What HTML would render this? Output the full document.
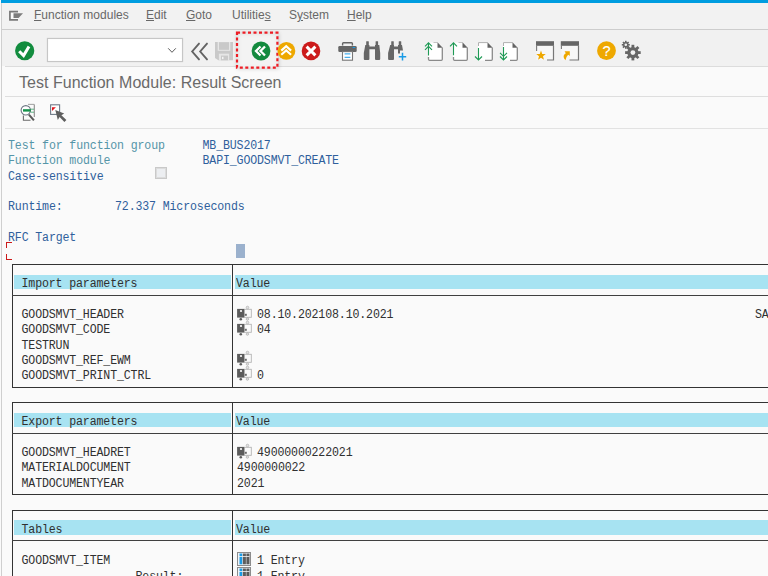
<!DOCTYPE html>
<html><head><meta charset="utf-8">
<style>
*{margin:0;padding:0;box-sizing:border-box}
html,body{width:768px;height:576px;overflow:hidden;background:#fafafa;position:relative;font-family:"Liberation Sans",sans-serif}
.a{position:absolute}
.m{position:absolute;font-family:"Liberation Mono",monospace;font-size:11.6px;letter-spacing:-0.14px;white-space:pre;line-height:15px;color:#303030;transform:scaleY(1.07);transform-origin:0 8px}
.mn{position:absolute;font-size:12px;line-height:14px;color:#686868;white-space:pre}
.mn u{text-decoration:underline;text-underline-offset:1px}
.ic{position:absolute}
.tc{color:#5595a8}
.bl{color:#2f5f9c}
</style></head><body>
<!-- top blue bar -->
<div class="a" style="left:1px;top:0;width:767px;height:3px;background:#009de0"></div>
<!-- menu bar -->
<div class="a" style="left:2px;top:3px;width:766px;height:26px;background:#f2f2f2"></div>
<div class="a" style="left:2px;top:29px;width:766px;height:1px;background:#cdcdcd"></div>
<!-- toolbar -->
<div class="a" style="left:2px;top:30px;width:766px;height:36px;background:#f1f1f1"></div>
<div class="a" style="left:5px;top:66px;width:763px;height:1px;background:#dcdcdc"></div>
<!-- title -->
<div class="a" style="left:0;top:67px;width:768px;height:29px;background:#fafafa"></div>
<div class="a" style="left:5px;top:96px;width:763px;height:1px;background:#dedede"></div>
<!-- app toolbar -->
<div class="a" style="left:0;top:97px;width:768px;height:31px;background:#fafafa"></div>
<div class="a" style="left:5px;top:128px;width:763px;height:1px;background:#e2e2e2"></div>
<!-- left border -->
<div class="a" style="left:1px;top:3px;width:1px;height:573px;background:#cfcfcf"></div>

<!-- menu -->
<svg class="ic" style="left:9px;top:10px" width="15" height="12" viewBox="0 0 15 12">
  <rect x="1.7" y="2.4" width="7.3" height="6.6" fill="#fafafa"/>
  <path d="M9 1.6H0.9V9.8H9" fill="none" stroke="#7a7a7a" stroke-width="1.7"/>
  <path d="M4.5 3.2H14L9.6 7.9H4.5Z" fill="#7d7d7d"/>
</svg>
<div class="mn" style="left:34px;top:8px"><u>F</u>unction modules</div>
<div class="mn" style="left:146px;top:8px"><u>E</u>dit</div>
<div class="mn" style="left:186px;top:8px"><u>G</u>oto</div>
<div class="mn" style="left:232px;top:8px">Utilitie<u>s</u></div>
<div class="mn" style="left:289px;top:8px">S<u>y</u>stem</div>
<div class="mn" style="left:347px;top:8px"><u>H</u>elp</div>

<!-- toolbar icons -->
<svg class="ic" style="left:15px;top:41px" width="20" height="20" viewBox="0 0 20 20">
  <circle cx="9.7" cy="9.75" r="9.6" fill="#128c3e"/>
  <path d="M4.2 10.2L8.6 14.6L14 5.6" fill="none" stroke="#fff" stroke-width="3" stroke-linejoin="miter"/>
</svg>
<div class="a" style="left:47px;top:38px;width:136px;height:23.5px;background:#fff;border:1px solid #c6c6c6;box-shadow:0 0 1px rgba(0,0,0,0.15), inset 0 0 1px rgba(0,0,0,0.12)"></div>
<svg class="ic" style="left:167px;top:47px" width="10" height="7" viewBox="0 0 10 7">
  <path d="M1.2 1.3L5 5.3L8.8 1.3" fill="none" stroke="#5a5a5a" stroke-width="1"/>
</svg>
<svg class="ic" style="left:190px;top:42px" width="19" height="19" viewBox="0 0 19 19">
  <path d="M9 1.6L2.2 9.5L9 17.4M17 1.6L10.2 9.5L17 17.4" fill="none" stroke="#636363" stroke-width="1.9" stroke-linecap="round"/>
</svg>
<svg class="ic" style="left:215px;top:42px" width="19" height="19" viewBox="0 0 19 19">
  <path d="M0 0H18V18.3H3.4L0 16Z" fill="#c9c9c9"/>
  <rect x="2.7" y="0" width="12.6" height="8.8" fill="#e6e6e6"/>
  <rect x="4" y="0.2" width="10" height="7.6" fill="#c9c9c9"/>
  <rect x="3.9" y="11.7" width="10.3" height="6.6" fill="#e6e6e6"/>
  <rect x="6" y="13.6" width="7" height="4.7" fill="#c9c9c9"/>
  <rect x="7" y="14.8" width="1.5" height="2.3" fill="#f4f4f4"/>
</svg>
<!-- focused button -->
<div class="a" style="left:236px;top:32px;width:42px;height:36px;background:#f3f3f3;box-shadow:1px 1px 4px rgba(0,0,0,0.16), inset 1px 1px 5px rgba(0,0,0,0.13)"></div>
<svg class="ic" style="left:235px;top:31px" width="45" height="39" viewBox="0 0 45 39"><rect x="2" y="1.6" width="40.4" height="35" fill="none" stroke="#ee1c24" stroke-width="2.2" stroke-dasharray="3 2.5"/></svg>
<svg class="ic" style="left:251px;top:41px" width="20" height="20" viewBox="0 0 20 20">
  <circle cx="10" cy="10" r="9.4" fill="#138a3e"/>
  <path d="M9.5 5.5L5 10L9.5 14.5M14 5.5L9.5 10L14 14.5" fill="none" stroke="#fff" stroke-width="2.3"/>
</svg>
<svg class="ic" style="left:276px;top:41px" width="20" height="20" viewBox="0 0 20 20">
  <circle cx="10.4" cy="9.9" r="8.9" fill="#eea800"/>
  <path d="M5.3 9.6L10.2 5.2L15.1 9.6M5.3 13.8L10.2 9.4L15.1 13.8" fill="none" stroke="#fff" stroke-width="2.1"/>
</svg>
<svg class="ic" style="left:301px;top:41px" width="20" height="20" viewBox="0 0 20 20">
  <circle cx="10" cy="9.9" r="9.3" fill="#cc1b1b"/>
  <path d="M5.6 5.6L14.4 14.4M14.4 5.6L5.6 14.4" fill="none" stroke="#fff" stroke-width="2.9"/>
</svg>
<svg class="ic" style="left:338px;top:42px" width="19" height="19" viewBox="0 0 19 19">
  <path d="M4.6 3.4V1.5Q4.6 0.7 5.4 0.7H13.6Q14.4 0.7 14.4 1.5V3.4" fill="none" stroke="#666" stroke-width="1.4"/>
  <rect x="0.3" y="3.9" width="18.4" height="6.2" rx="1.3" fill="#666"/>
  <rect x="14.6" y="5" width="2.6" height="1" fill="#1a9be6"/>
  <rect x="4.5" y="9.6" width="10" height="8.6" fill="#fff" stroke="#777" stroke-width="1.1"/>
  <rect x="6.6" y="11.4" width="5.8" height="1" fill="#1a9be6"/>
  <rect x="6.6" y="14.8" width="5.8" height="1" fill="#1a9be6"/>
</svg>
<svg class="ic" style="left:363px;top:41px" width="19" height="20" viewBox="0 0 19 20">
  <path d="M3.2 0.6Q3.2 0.2 3.6 0.2H5.4Q5.8 0.2 5.8 0.6V4H6.4V5.5H12V4H12.6V0.6Q12.6 0.2 13 0.2H14.7Q15.1 0.2 15.1 0.6V4H16.3L17.2 12V18Q17.2 19 16.2 19H13Q12 19 12 18V8.3H6.4V18Q6.4 19 5.4 19H1.8Q0.8 19 0.8 18V12L2.3 4H3.2Z" fill="#666"/>
</svg>
<svg class="ic" style="left:388px;top:41px" width="19" height="20" viewBox="0 0 19 20">
  <path d="M3.25 0.6Q3.25 0.2 3.65 0.2H5.35Q5.75 0.2 5.75 0.6V4H6V5.5H10V4H10.75V0.6Q10.75 0.2 11.15 0.2H12.85Q13.25 0.2 13.25 0.6V4H14L15 9.5H12V12.4H10V8.3H6V18Q6 19 5 19H1.1Q0.1 19 0.1 18V12L2.2 4H3.25Z" fill="#666"/>
  <path d="M14.5 11.8V19.5M10.8 15.8H18.2" stroke="#1a9be6" stroke-width="1.5"/>
</svg>
<!-- page icons -->
<svg class="ic" style="left:424px;top:42px" width="20" height="19" viewBox="0 0 20 19">
  <path d="M4 0.5H13.5L18.5 5.5V18.5H4Z" fill="#fff"/>
  <path d="M9.5 0.5H13.5" stroke="#c4c4c4" stroke-width="1"/>
  <path d="M13.5 0.3L18.7 5.8H13.5Z" fill="#646464"/>
  <path d="M18.3 5.5V17.3Q18.3 18.3 17.3 18.3H5.5Q4.5 18.3 4.5 17.3V15" fill="none" stroke="#8a8a8a" stroke-width="1.3"/>
  <path d="M4.5 13.5V1M1 4.3L4.5 0.8L8 4.3M1 7.9L4.5 4.4L8 7.9" fill="none" stroke="#1f9a55" stroke-width="1.1"/>
</svg>
<svg class="ic" style="left:449px;top:42px" width="20" height="19" viewBox="0 0 20 19">
  <path d="M4 0.5H13.5L18.5 5.5V18.5H4Z" fill="#fff"/>
  <path d="M9.5 0.5H13.5" stroke="#c4c4c4" stroke-width="1"/>
  <path d="M13.5 0.3L18.7 5.8H13.5Z" fill="#646464"/>
  <path d="M18.3 5.5V17.3Q18.3 18.3 17.3 18.3H5.5Q4.5 18.3 4.5 17.3V15" fill="none" stroke="#8a8a8a" stroke-width="1.3"/>
  <path d="M4.5 13.2V1M1 4.3L4.5 0.8L8 4.3" fill="none" stroke="#1f9a55" stroke-width="1.1"/>
</svg>
<svg class="ic" style="left:474px;top:42px" width="20" height="19" viewBox="0 0 20 19">
  <path d="M4 0.5H13.5L18.5 5.5V18.5H4Z" fill="#fff"/>
  <path d="M4.5 4V0.6H13.5" fill="none" stroke="#b0b0b0" stroke-width="1"/>
  <path d="M13.5 0.3L18.7 5.8H13.5Z" fill="#646464"/>
  <path d="M18.3 5.5V17.3Q18.3 18.3 17.3 18.3H11" fill="none" stroke="#8a8a8a" stroke-width="1.3"/>
  <path d="M4.5 6V18M1 14.5L4.5 18L8 14.5" fill="none" stroke="#1f9a55" stroke-width="1.1"/>
</svg>
<svg class="ic" style="left:499px;top:42px" width="20" height="19" viewBox="0 0 20 19">
  <path d="M4 0.5H13.5L18.5 5.5V18.5H4Z" fill="#fff"/>
  <path d="M4.5 4V0.6H13.5" fill="none" stroke="#b0b0b0" stroke-width="1"/>
  <path d="M13.5 0.3L18.7 5.8H13.5Z" fill="#646464"/>
  <path d="M18.3 5.5V17.3Q18.3 18.3 17.3 18.3H11" fill="none" stroke="#8a8a8a" stroke-width="1.3"/>
  <path d="M4.5 5V17.5M1 10.8L4.5 14.3L8 10.8M1 14.5L4.5 18L8 14.5" fill="none" stroke="#1f9a55" stroke-width="1.1"/>
</svg>
<!-- window icons -->
<svg class="ic" style="left:535px;top:41px" width="20" height="20" viewBox="0 0 20 20">
  <rect x="1.5" y="4.6" width="17" height="14.4" fill="#f7f7f7"/>
  <rect x="1" y="0.2" width="18" height="4.6" fill="#666"/>
  <path d="M1.6 4.5V10" fill="none" stroke="#777" stroke-width="1.1"/>
  <path d="M18.5 4.5V19H12" fill="none" stroke="#777" stroke-width="1.2"/>
  <path d="M6.00 9.60L7.23 12.90L10.76 13.05L8.00 15.25L8.94 18.65L6.00 16.70L3.06 18.65L4.00 15.25L1.24 13.05L4.77 12.90Z" fill="#eea800"/>
</svg>
<svg class="ic" style="left:560px;top:41px" width="20" height="20" viewBox="0 0 20 20">
  <rect x="1.5" y="4.6" width="17" height="14.4" fill="#f7f7f7"/>
  <rect x="0.8" y="0.2" width="18.2" height="4.6" fill="#666"/>
  <path d="M1.4 4.5V8" fill="none" stroke="#777" stroke-width="1.1"/>
  <path d="M18.5 4.5V19H9.5" fill="none" stroke="#777" stroke-width="1.2"/>
  <path d="M5.5 19.2C3.2 17 2.8 14 5.8 12.3L4.6 10.2H9.8V15L8.4 13.8C6.6 15 6.3 17 5.5 19.2Z" fill="#eea800"/>
</svg>
<svg class="ic" style="left:597px;top:41px" width="20" height="20" viewBox="0 0 20 20">
  <circle cx="9.5" cy="9.7" r="9.4" fill="#eea800"/>
  <text x="9.6" y="15" text-anchor="middle" font-family="Liberation Sans" font-size="14.5" fill="#fff" stroke="#fff" stroke-width="0.15">?</text>
</svg>
<svg class="ic" style="left:621px;top:40px" width="22" height="22" viewBox="0 0 22 22">
  <circle cx="4.80" cy="4.80" r="2.70" fill="#666"/><rect x="4.00" y="0.80" width="1.60" height="4.00" fill="#666" transform="rotate(0.0 4.80 4.80)"/><rect x="4.00" y="0.80" width="1.60" height="4.00" fill="#666" transform="rotate(45.0 4.80 4.80)"/><rect x="4.00" y="0.80" width="1.60" height="4.00" fill="#666" transform="rotate(90.0 4.80 4.80)"/><rect x="4.00" y="0.80" width="1.60" height="4.00" fill="#666" transform="rotate(135.0 4.80 4.80)"/><rect x="4.00" y="0.80" width="1.60" height="4.00" fill="#666" transform="rotate(180.0 4.80 4.80)"/><rect x="4.00" y="0.80" width="1.60" height="4.00" fill="#666" transform="rotate(225.0 4.80 4.80)"/><rect x="4.00" y="0.80" width="1.60" height="4.00" fill="#666" transform="rotate(270.0 4.80 4.80)"/><rect x="4.00" y="0.80" width="1.60" height="4.00" fill="#666" transform="rotate(315.0 4.80 4.80)"/><circle cx="4.80" cy="4.80" r="1.30" fill="#f1f1f1"/>
  <circle cx="11.9" cy="12.6" r="6.2" fill="#f1f1f1"/>
  <circle cx="11.90" cy="12.60" r="5.60" fill="#666"/><rect x="10.50" y="4.80" width="2.80" height="7.80" fill="#666" transform="rotate(0.0 11.90 12.60)"/><rect x="10.50" y="4.80" width="2.80" height="7.80" fill="#666" transform="rotate(45.0 11.90 12.60)"/><rect x="10.50" y="4.80" width="2.80" height="7.80" fill="#666" transform="rotate(90.0 11.90 12.60)"/><rect x="10.50" y="4.80" width="2.80" height="7.80" fill="#666" transform="rotate(135.0 11.90 12.60)"/><rect x="10.50" y="4.80" width="2.80" height="7.80" fill="#666" transform="rotate(180.0 11.90 12.60)"/><rect x="10.50" y="4.80" width="2.80" height="7.80" fill="#666" transform="rotate(225.0 11.90 12.60)"/><rect x="10.50" y="4.80" width="2.80" height="7.80" fill="#666" transform="rotate(270.0 11.90 12.60)"/><rect x="10.50" y="4.80" width="2.80" height="7.80" fill="#666" transform="rotate(315.0 11.90 12.60)"/><circle cx="11.90" cy="12.60" r="2.40" fill="#f1f1f1"/>
</svg>

<!-- title -->
<div class="a" style="left:19px;top:74px;font-size:16px;line-height:18px;letter-spacing:0.03px;color:#6a6a6a;white-space:pre">Test Function Module: Result Screen</div>

<!-- app toolbar icons -->
<svg class="ic" style="left:20px;top:103px" width="17" height="19" viewBox="0 0 17 19">
  <path d="M8 1.4H14.3" stroke="#a8a8a8" stroke-width="1.1"/>
  <path d="M14.3 1.4V14" stroke="#8c8c8c" stroke-width="1.1"/>
  <path d="M3.4 12.5V17.3H10.5" fill="none" stroke="#6a6a6a" stroke-width="1.1"/>
  <path d="M10.6 6.2H14M10.6 9.2H14" stroke="#3aa566" stroke-width="0.8"/>
  <circle cx="5.8" cy="7.3" r="4.7" fill="#fff" stroke="#6d7784" stroke-width="1.1"/>
  <rect x="3" y="6.2" width="7.8" height="2.4" fill="#13924a"/>
  <path d="M8.9 11.6L13.9 17.4" stroke="#5a5a5a" stroke-width="2.1"/>
</svg>
<svg class="ic" style="left:49px;top:103px" width="19" height="20" viewBox="0 0 19 20">
  <rect x="1.6" y="1.8" width="9" height="9.6" fill="#fff" stroke="#6f7a88" stroke-width="1.1"/>
  <path d="M3 4.3H6.9L3 8Z" fill="#e0141c"/>
  <path d="M6.3 7.1L15.2 10.4L12.4 12.3L17.4 17.1L15.4 19.1L10.6 14.1L8.8 16.9Z" fill="#5f5f5f"/>
</svg>

<!-- content -->
<div class="m tc" style="left:8px;top:138px">Test for function group</div>
<div class="m bl" style="left:202.5px;top:138px">MB_BUS2017</div>
<div class="m tc" style="left:8px;top:153px">Function module</div>
<div class="m bl" style="left:202.5px;top:153px">BAPI_GOODSMVT_CREATE</div>
<div class="m bl" style="left:8px;top:169px">Case-sensitive</div>
<div class="a" style="left:155px;top:167px;width:12px;height:12px;background:#eceef1;border:1px solid #c9c9c9;box-shadow:inset 0 0 0 1px #dcdcdc"></div>
<div class="m bl" style="left:8px;top:199px">Runtime:</div>
<div class="m bl" style="left:115px;top:199px">72.337 Microseconds</div>
<div class="m bl" style="left:8px;top:230px">RFC Target</div>
<!-- red bracket -->
<div class="a" style="left:6px;top:242px;width:6px;height:6px;border-left:1.3px solid #cc1a1a;border-top:1.3px solid #cc1a1a"></div>
<div class="a" style="left:6px;top:254px;width:6px;height:6px;border-left:1.3px solid #cc1a1a;border-bottom:1.3px solid #cc1a1a"></div>
<div class="a" style="left:236px;top:244px;width:9px;height:14px;background:#9bb1cd"></div>
<!-- table 1 -->
<div class="a" style="left:12px;top:264px;width:760px;height:124px;border:1px solid #333;border-right:none;"></div>
<div class="a" style="left:14px;top:275px;width:217px;height:14px;background:#a7e3f2"></div>
<div class="a" style="left:235px;top:275px;width:533px;height:14px;background:#a7e3f2"></div>
<div class="a" style="left:12px;top:295px;width:756px;height:1px;background:#404040"></div>
<div class="a" style="left:232px;top:264px;width:1px;height:123px;background:#333"></div>
<div class="m " style="left:21.5px;top:276px">Import parameters</div>
<div class="m " style="left:236px;top:276px">Value</div>
<div class="m " style="left:21.5px;top:307px">GOODSMVT_HEADER</div>
<div class="m " style="left:257px;top:307px">08.10.202108.10.2021</div>
<div class="m " style="left:21.5px;top:322px">GOODSMVT_CODE</div>
<div class="m " style="left:257px;top:322px">04</div>
<div class="m " style="left:21.5px;top:338px">TESTRUN</div>
<div class="m " style="left:21.5px;top:353px">GOODSMVT_REF_EWM</div>
<div class="m " style="left:21.5px;top:368px">GOODSMVT_PRINT_CTRL</div>
<div class="m " style="left:257px;top:368px">0</div>
<div class="m " style="left:755px;top:307px">SA</div>
<!-- table 2 -->
<div class="a" style="left:12px;top:402px;width:760px;height:93px;border:1px solid #333;border-right:none;"></div>
<div class="a" style="left:14px;top:413px;width:217px;height:14px;background:#a7e3f2"></div>
<div class="a" style="left:235px;top:413px;width:533px;height:14px;background:#a7e3f2"></div>
<div class="a" style="left:12px;top:433px;width:756px;height:1px;background:#404040"></div>
<div class="a" style="left:232px;top:402px;width:1px;height:92px;background:#333"></div>
<div class="m " style="left:21.5px;top:414px">Export parameters</div>
<div class="m " style="left:236px;top:414px">Value</div>
<div class="m " style="left:21.5px;top:445px">GOODSMVT_HEADRET</div>
<div class="m " style="left:257px;top:445px">49000000222021</div>
<div class="m " style="left:21.5px;top:460px">MATERIALDOCUMENT</div>
<div class="m " style="left:237px;top:460px">4900000022</div>
<div class="m " style="left:21.5px;top:476px">MATDOCUMENTYEAR</div>
<div class="m " style="left:237px;top:476px">2021</div>
<!-- table 3 -->
<div class="a" style="left:12px;top:510px;width:760px;height:69px;border:1px solid #333;border-right:none;border-bottom:none;"></div>
<div class="a" style="left:14px;top:520px;width:217px;height:15px;background:#a7e3f2"></div>
<div class="a" style="left:235px;top:520px;width:533px;height:15px;background:#a7e3f2"></div>
<div class="a" style="left:12px;top:540px;width:756px;height:1px;background:#404040"></div>
<div class="a" style="left:232px;top:510px;width:1px;height:68px;background:#333"></div>
<div class="m " style="left:21.5px;top:522px">Tables</div>
<div class="m " style="left:236px;top:522px">Value</div>
<div class="m " style="left:21.5px;top:553px">GOODSMVT_ITEM</div>
<div class="m " style="left:257px;top:553px">1 Entry</div>
<div class="m " style="left:135.5px;top:569px">Result:</div>
<div class="m " style="left:257px;top:569px">1 Entry</div>
<svg class="ic" style="left:236px;top:304px" width="17" height="17" viewBox="0 0 17 17">
<rect x="8.3" y="5.3" width="7" height="8" fill="#fbfbfb" stroke="#b4b4b4" stroke-width="0.9"/>
<rect x="1.1" y="4.9" width="7.1" height="8.7" fill="#5c5c5c"/><circle cx="5" cy="7" r="1.1" fill="#fff"/>
<rect x="8.8" y="9.8" width="2" height="2" fill="#6a6a6a"/>
<circle cx="11.5" cy="3.5" r="1.3" fill="#e2e2e2" stroke="#b0b0b0" stroke-width="0.7"/>
<circle cx="4.8" cy="15.2" r="1.3" fill="#5c5c5c"/><circle cx="11.4" cy="15.1" r="1.2" fill="#e4e4e4" stroke="#aaa" stroke-width="0.7"/>
</svg><svg class="ic" style="left:236px;top:319px" width="17" height="17" viewBox="0 0 17 17">
<rect x="8.3" y="5.3" width="7" height="8" fill="#fbfbfb" stroke="#b4b4b4" stroke-width="0.9"/>
<rect x="1.1" y="4.9" width="7.1" height="8.7" fill="#5c5c5c"/><circle cx="5" cy="7" r="1.1" fill="#fff"/>
<rect x="8.8" y="9.8" width="2" height="2" fill="#6a6a6a"/>
<circle cx="11.5" cy="3.5" r="1.3" fill="#e2e2e2" stroke="#b0b0b0" stroke-width="0.7"/>
<circle cx="4.8" cy="15.2" r="1.3" fill="#5c5c5c"/><circle cx="11.4" cy="15.1" r="1.2" fill="#e4e4e4" stroke="#aaa" stroke-width="0.7"/>
</svg><svg class="ic" style="left:236px;top:349px" width="17" height="17" viewBox="0 0 17 17">
<rect x="8.3" y="5.3" width="7" height="8" fill="#fbfbfb" stroke="#b4b4b4" stroke-width="0.9"/>
<rect x="1.1" y="4.9" width="7.1" height="8.7" fill="#5c5c5c"/><circle cx="5" cy="7" r="1.1" fill="#fff"/>
<rect x="8.8" y="9.8" width="2" height="2" fill="#6a6a6a"/>
<circle cx="11.5" cy="3.5" r="1.3" fill="#e2e2e2" stroke="#b0b0b0" stroke-width="0.7"/>
<circle cx="4.8" cy="15.2" r="1.3" fill="#5c5c5c"/><circle cx="11.4" cy="15.1" r="1.2" fill="#e4e4e4" stroke="#aaa" stroke-width="0.7"/>
</svg><svg class="ic" style="left:236px;top:364px" width="17" height="17" viewBox="0 0 17 17">
<rect x="8.3" y="5.3" width="7" height="8" fill="#fbfbfb" stroke="#b4b4b4" stroke-width="0.9"/>
<rect x="1.1" y="4.9" width="7.1" height="8.7" fill="#5c5c5c"/><circle cx="5" cy="7" r="1.1" fill="#fff"/>
<rect x="8.8" y="9.8" width="2" height="2" fill="#6a6a6a"/>
<circle cx="11.5" cy="3.5" r="1.3" fill="#e2e2e2" stroke="#b0b0b0" stroke-width="0.7"/>
<circle cx="4.8" cy="15.2" r="1.3" fill="#5c5c5c"/><circle cx="11.4" cy="15.1" r="1.2" fill="#e4e4e4" stroke="#aaa" stroke-width="0.7"/>
</svg><svg class="ic" style="left:236px;top:442px" width="17" height="17" viewBox="0 0 17 17">
<rect x="8.3" y="5.3" width="7" height="8" fill="#fbfbfb" stroke="#b4b4b4" stroke-width="0.9"/>
<rect x="1.1" y="4.9" width="7.1" height="8.7" fill="#5c5c5c"/><circle cx="5" cy="7" r="1.1" fill="#fff"/>
<rect x="8.8" y="9.8" width="2" height="2" fill="#6a6a6a"/>
<circle cx="11.5" cy="3.5" r="1.3" fill="#e2e2e2" stroke="#b0b0b0" stroke-width="0.7"/>
<circle cx="4.8" cy="15.2" r="1.3" fill="#5c5c5c"/><circle cx="11.4" cy="15.1" r="1.2" fill="#e4e4e4" stroke="#aaa" stroke-width="0.7"/>
</svg><svg class="ic" style="left:237px;top:552px" width="14" height="14" viewBox="0 0 14 14">
<rect x="0.5" y="0.5" width="13" height="13" fill="#eef4fa" stroke="#8c8c8c" stroke-width="1"/>
<rect x="2.5" y="1.5" width="2.7" height="10.8" fill="#1a9be6"/><rect x="5.8" y="1.5" width="3.1" height="10.8" fill="#5e5e5e"/><rect x="9.4" y="1.5" width="3.1" height="10.8" fill="#5a5a5a"/>
<rect x="1.5" y="4" width="11" height="0.8" fill="#f4f4f4"/>
</svg><svg class="ic" style="left:237px;top:567px" width="14" height="14" viewBox="0 0 14 14">
<rect x="0.5" y="0.5" width="13" height="13" fill="#eef4fa" stroke="#8c8c8c" stroke-width="1"/>
<rect x="2.5" y="1.5" width="2.7" height="10.8" fill="#1a9be6"/><rect x="5.8" y="1.5" width="3.1" height="10.8" fill="#5e5e5e"/><rect x="9.4" y="1.5" width="3.1" height="10.8" fill="#5a5a5a"/>
<rect x="1.5" y="4" width="11" height="0.8" fill="#f4f4f4"/>
</svg>
</body></html>
